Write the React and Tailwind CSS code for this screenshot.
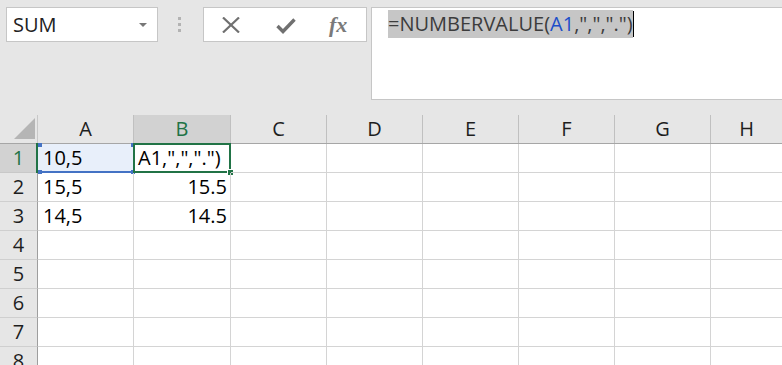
import React from "react";

const font = { fontFamily: '"Open Sans", "Noto Sans", sans-serif' };

const cols = ["A", "B", "C", "D", "E", "F", "G", "H"];
const widths = [
  "w-[96px]",
  "w-[97px]",
  "w-[96px]",
  "w-[96px]",
  "w-[96px]",
  "w-[96px]",
  "w-[96px]",
  "flex-1",
];

const data = {
  2: { A: "15,5", B: "15.5" },
  3: { A: "14,5", B: "14.5" },
};

function Corner({ className }) {
  return <div className={"absolute w-[4px] h-[4px] bg-[#4472c4] " + className} />;
}

function TopBar() {
  return (
    <div className="h-[100px] flex items-start pt-[7px] bg-[#e6e6e6]">
      {/* name box */}
      <div className="ml-[6px] w-[152px] h-[35px] bg-white border border-[#c6c6c6] flex items-center justify-between pl-[6px] pr-[10px]">
        <span className="text-[20px] text-[#222] leading-none">SUM</span>
        <svg width="8" height="4" viewBox="0 0 8 4">
          <path d="M0 0 L8 0 L4 4 Z" fill="#777" />
        </svg>
      </div>

      {/* grip dots */}
      <div className="ml-[20px] mt-[10px] flex flex-col gap-[3px]">
        <div className="w-[3px] h-[3px] bg-[#b3b3b3]" />
        <div className="w-[3px] h-[3px] bg-[#b3b3b3]" />
        <div className="w-[3px] h-[3px] bg-[#b3b3b3]" />
      </div>

      {/* cancel / enter / fx */}
      <div className="ml-[22px] w-[164px] h-[35px] bg-white border border-[#c6c6c6] flex items-center">
        <svg className="ml-[18px]" width="18" height="16" viewBox="0 0 18 16">
          <path d="M1 0.5 L17 15.5 M17 0.5 L1 15.5" stroke="#707070" strokeWidth="2.2" />
        </svg>
        <svg className="ml-[36px] mt-[2px]" width="20" height="16" viewBox="0 0 20 16">
          <path d="M1.5 8 L7 13.5 L18.5 1.5" stroke="#707070" strokeWidth="3.4" fill="none" />
        </svg>
        <span
          className="ml-[33px] text-[22px] italic font-bold text-[#7a7a7a] leading-none"
          style={{ fontFamily: '"Liberation Serif", "DejaVu Serif", serif' }}
        >
          fx
        </span>
      </div>

      {/* formula bar */}
      <div className="ml-[4px] flex-1 h-[93px] bg-white border border-r-0 border-[#c6c6c6] pl-[16px] pt-[2px]">
        <div className="flex items-center h-[28px]">
          <span className="bg-[#c6c6c6] h-[28px] flex items-center text-[20px] text-[#3c3c3c] leading-none">
            =NUMBERVALUE(<span className="text-[#1d4fc9]">A1</span>,",",".")
          </span>
          <div className="w-[1px] h-[26px] bg-black" />
        </div>
      </div>
    </div>
  );
}

function HeaderRow() {
  return (
    <div className="flex bg-[#e6e6e6] pt-[15px] border-b border-[#a6a6a6]">
      <div className="relative w-[38px] h-[28px] border-r border-[#c8c8c8]">
        <svg className="absolute left-[14px] top-[3px]" width="21" height="21" viewBox="0 0 21 21">
          <path d="M0 21 L21 21 L21 0 Z" fill="#b5b5b5" />
        </svg>
      </div>
      {cols.map((c, i) => (
        <div
          key={c}
          className={
            widths[i] +
            " relative h-[28px] flex items-center justify-center text-[20px] leading-none " +
            (i < 7 ? "border-r border-[#c0c0c0] " : "") +
            (c === "B" ? "bg-[#d2d2d2] text-[#217346]" : "text-[#1e1e1e]")
          }
        >
          {c}
          {c === "B" && (
            <div className="absolute left-[-1px] right-[-1px] bottom-[-2px] h-[2px] bg-[#217346]" />
          )}
        </div>
      ))}
    </div>
  );
}

function Row({ n }) {
  const sel = n === 1;
  return (
    <div className="flex h-[29px]">
      <div
        className={
          "relative w-[38px] h-[29px] flex items-center justify-center text-[20px] leading-none border-b border-r " +
          (sel
            ? "bg-[#d2d2d2] text-[#217346] border-b-[#c8c8c8] border-r-[#217346]"
            : "bg-[#e6e6e6] text-[#1e1e1e] border-b-[#cfcfcf] border-r-[#9e9e9e]")
        }
      >
        {n}
        {sel && <div className="absolute right-[-1px] top-[-1px] bottom-[-1px] w-[2px] bg-[#217346]" />}
      </div>
      {cols.map((c, i) => {
        const v = data[n] && data[n][c];
        const base =
          widths[i] +
          " relative h-[29px] border-b border-[#d4d4d4] flex items-center text-[20px] leading-none text-black " +
          (i < 7 ? "border-r " : "");
        if (n === 1 && c === "A") {
          return (
            <div key={c} className={base + "bg-[#e8effa] pl-[5px]"}>
              10,5
              <div className="absolute left-0 right-[-1px] bottom-[-1px] h-[2px] bg-[#4472c4]" />
              <Corner className="left-0 top-[-1px]" />
              <Corner className="left-0 bottom-[-2px]" />
              <Corner className="right-[-2px] top-[-1px]" />
              <Corner className="right-[-2px] bottom-[-2px]" />
            </div>
          );
        }
        if (n === 1 && c === "B") {
          return (
            <div key={c} className={base + "pl-[4px]"}>
              A1,",",".")
              <div className="absolute left-[-1px] top-[-1px] right-[-1px] bottom-[-1px] border-2 border-[#217346]" />
              <div className="absolute right-[-4px] bottom-[-4px] w-[7px] h-[7px] bg-[#217346] border border-white" />
            </div>
          );
        }
        return (
          <div
            key={c}
            className={base + (c === "B" ? "justify-end pr-[3px]" : "pl-[5px]")}
          >
            {v}
          </div>
        );
      })}
    </div>
  );
}

export default function App() {
  return (
    <div className="w-[782px] h-[365px] overflow-hidden bg-white" style={font}>
      <TopBar />
      <HeaderRow />
      {[1, 2, 3, 4, 5, 6, 7, 8].map((n) => (
        <Row key={n} n={n} />
      ))}
    </div>
  );
}
